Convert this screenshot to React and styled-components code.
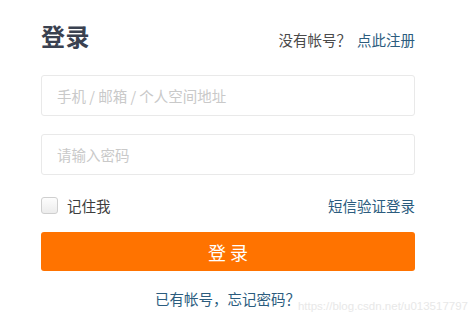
import styled, { createGlobalStyle } from "styled-components";
import { useState } from "react";

const GlobalStyle = createGlobalStyle`
    html, body {
        margin: 0;
        padding: 0;
        background: #fff;
    }
    body {
        font-family: "Noto Sans CJK SC", "Liberation Sans", sans-serif;
    }
`;

const Page = styled.div`
    width: 474px;
    height: 321px;
    overflow: hidden;
    position: relative;
    box-sizing: border-box;
    padding-left: 41px;
    display: flex;
`;

const Form = styled.form`
    width: 374px;
    padding-top: 17px;
    display: flex;
    flex-direction: column;
`;

const Header = styled.header`
    display: flex;
    justify-content: space-between;
    align-items: flex-end;
    height: 37px;
    margin-bottom: 21px;
`;

const Title = styled.h1`
    margin: 0;
    font-size: 24px;
    line-height: 36px;
    font-weight: 700;
    color: #3a4150;
    letter-spacing: 0.5px;
`;

const Hint = styled.div`
    font-size: 14.5px;
    line-height: 20px;
    color: #4a4a4a;
    padding-bottom: 4px;
    & a {
        margin-left: 6px;
    }
`;

const LinkText = styled.a`
    color: #2b5c7e;
    text-decoration: none;
    cursor: pointer;
    font-size: 14.5px;
`;

const Input = styled.input`
    box-sizing: border-box;
    width: 100%;
    height: 41px;
    margin-bottom: ${(p) => p.$gap}px;
    padding: 0 15px;
    border: 1px solid #e9e9e9;
    border-radius: 3px;
    font-family: inherit;
    font-size: 14.5px;
    color: #333;
    outline: none;
    &::placeholder {
        color: #c9c9c9;
    }
`;

const Row = styled.div`
    display: flex;
    justify-content: space-between;
    align-items: center;
    height: 20px;
    margin-top: 2px;
    margin-bottom: 17px;
`;

const Remember = styled.label`
    display: flex;
    align-items: center;
    gap: 9px;
    font-size: 14.5px;
    color: #3d3d3d;
    cursor: pointer;
`;

const Box = styled.span`
    box-sizing: border-box;
    width: 17px;
    height: 17px;
    border: 1px solid #cfcfcf;
    border-radius: 3px;
    background: ${(p) => (p.$checked ? "#ff7300" : "linear-gradient(#fdfdfd, #ececec)")};
`;

const Button = styled.button`
    width: 100%;
    height: 39px;
    border: none;
    border-radius: 3px;
    background-color: #ff7300;
    color: #fff;
    font-family: inherit;
    font-size: 18px;
    cursor: pointer;
`;

const Footer = styled.div`
    text-align: center;
    margin-top: 17px;
    line-height: 20px;
    padding-right: 1px;
`;

const Watermark = styled.span`
    position: absolute;
    right: 6px;
    bottom: 9px;
    font-family: "Liberation Sans", sans-serif;
    font-size: 11.5px;
    color: #e8e8e8;
`;

const App = () => {
    const [remember, setRemember] = useState(false);

    return (
        <>
        <GlobalStyle />
        <Page>
            <Form onSubmit={(e) => e.preventDefault()}>
                <Header>
                    <Title>登录</Title>
                    <Hint>
                        没有帐号？<LinkText>点此注册</LinkText>
                    </Hint>
                </Header>
                <Input $gap={18} placeholder="手机 / 邮箱 / 个人空间地址" />
                <Input $gap={18} type="password" placeholder="请输入密码" />
                <Row>
                    <Remember onClick={() => setRemember(!remember)}>
                        <Box $checked={remember} />
                        记住我
                    </Remember>
                    <LinkText>短信验证登录</LinkText>
                </Row>
                <Button type="submit">登 录</Button>
                <Footer>
                    <LinkText>已有帐号，忘记密码？</LinkText>
                </Footer>
            </Form>
            <Watermark>https://blog.csdn.net/u013517797</Watermark>
        </Page>
        </>
    );
};

export default App;
